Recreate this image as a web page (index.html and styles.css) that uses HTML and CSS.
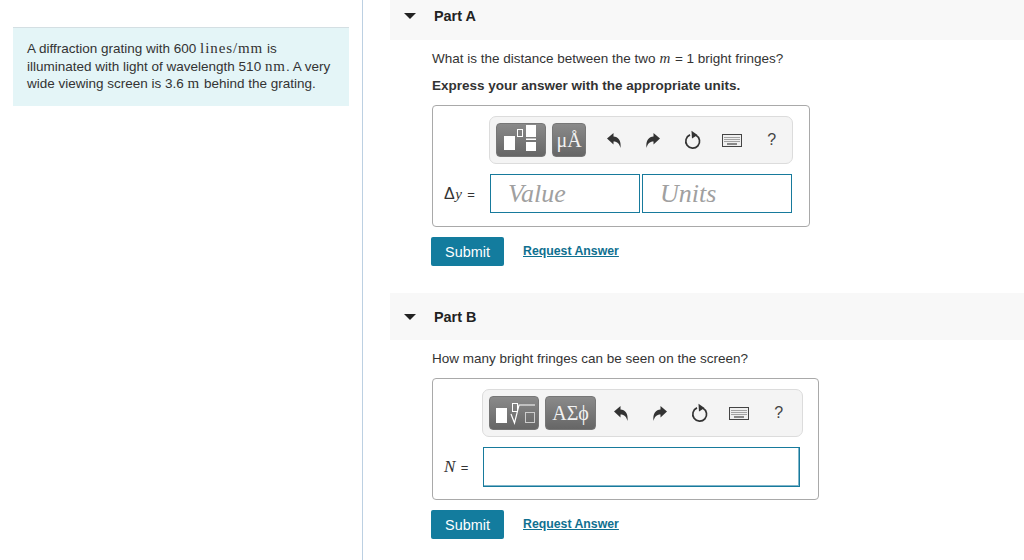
FILE: index.html
```html
<!DOCTYPE html>
<html lang="en">
<head>
<meta charset="utf-8">
<title>Diffraction grating</title>
<link rel="stylesheet" href="styles.css">
</head>
<body>
<div class="page">
  <aside class="left">
    <div class="intro">A diffraction grating with 600 <span class="mr">lines/mm</span> is illuminated with light of wavelength 510 <span class="mr">nm</span>. A very wide viewing screen is 3.6 <span class="mr">m</span> behind the grating.</div>
  </aside>
  <main class="right">
    <section class="part part-a">
      <header class="part-head head-a"><span class="caret"></span><h2>Part A</h2></header>
      <div class="part-body">
        <p class="q q-a">What is the distance between the two <i class="mi">m</i> = 1 bright fringes?</p>
        <p class="instr">Express your answer with the appropriate units.</p>
        <div class="answer answer-a">
          <div class="toolbar tb-a">
            <span class="tbtn tb-wide">
              <svg width="48" height="32" viewBox="1 1 48 32"><rect x="8" y="13" width="11" height="14" fill="#fff"/><rect x="21.5" y="6.5" width="5" height="7" fill="none" stroke="#fff"/><rect x="30" y="2" width="10" height="12" fill="#fff"/><rect x="30" y="15.5" width="10" height="1.5" fill="#fff"/><rect x="30" y="19" width="10" height="9" fill="#fff"/></svg>
            </span>
            <span class="tbtn tb-mu">μÅ</span>
            <div class="tools tools-a">
              <svg class="ic" width="16" height="17" viewBox="0 0 16 17"><use href="#undo"/></svg>
              <svg class="ic" width="16" height="17" viewBox="0 0 16 17"><use href="#redo"/></svg>
              <svg class="ic" width="18" height="20" viewBox="0 0 18 20"><use href="#reset"/></svg>
              <svg class="ic" width="20" height="13" viewBox="0 0 20 13"><use href="#kbd"/></svg>
              <span class="help">?</span>
            </div>
          </div>
          <div class="row row-a">
            <span class="lab lab-a"><span class="delta">Δ</span><i class="mi">y</i> =</span>
            <span class="field f-half">Value</span>
            <span class="field f-half">Units</span>
          </div>
        </div>
        <div class="actions actions-a"><button class="submit">Submit</button><a class="req" href="#">Request Answer</a></div>
      </div>
    </section>
    <section class="part part-b">
      <header class="part-head head-b"><span class="caret"></span><h2>Part B</h2></header>
      <div class="part-body">
        <p class="q q-b">How many bright fringes can be seen on the screen?</p>
        <div class="answer answer-b">
          <div class="toolbar tb-b">
            <span class="tbtn tb-wide">
              <svg width="48" height="32" viewBox="1 1 48 32"><rect x="7" y="12" width="11" height="15" fill="#fff"/><rect x="23.5" y="7.5" width="5" height="8" fill="none" stroke="#fff"/><path d="M22 18l3.5 9 4.5-18h16" fill="none" stroke="#fff" stroke-width="1.2"/><rect x="36.5" y="16.5" width="9" height="10" fill="none" stroke="#ccc"/></svg>
            </span>
            <span class="tbtn tb-greek">ΑΣϕ</span>
            <div class="tools tools-b">
              <svg class="ic" width="16" height="17" viewBox="0 0 16 17"><use href="#undo"/></svg>
              <svg class="ic" width="16" height="17" viewBox="0 0 16 17"><use href="#redo"/></svg>
              <svg class="ic" width="18" height="20" viewBox="0 0 18 20"><use href="#reset"/></svg>
              <svg class="ic" width="20" height="13" viewBox="0 0 20 13"><use href="#kbd"/></svg>
              <span class="help">?</span>
            </div>
          </div>
          <div class="row row-b">
            <span class="lab lab-b"><i class="mi mi-n">N</i> =</span>
            <span class="field f-full"></span>
          </div>
        </div>
        <div class="actions actions-b"><button class="submit">Submit</button><a class="req" href="#">Request Answer</a></div>
      </div>
    </section>
  </main>
</div>
<svg class="defs" width="0" height="0" aria-hidden="true">
  <defs>
    <path id="undo" d="M1 6.5 7.5 1V4.4C12 4.6 15.5 8 14.5 16 13.4 11.8 11.5 9.6 7.5 9.6V12.5Z" fill="#333"/>
    <path id="redo" d="M15 6.5 8.5 1V4.4C4 4.6 .5 8 1.5 16 2.6 11.8 4.5 9.6 8.5 9.6V12.5Z" fill="#333"/>
    <g id="reset"><path d="M12 5.2A6.9 6.9 0 1 1 6 4.9" fill="none" stroke="#333" stroke-width="1.7"/><path d="M7.5 .8 13.5 5 8 8.6Z" fill="#333"/></g>
    <g id="kbd"><rect x="0.5" y="0.5" width="19" height="12" fill="#efefef" stroke="#444"/><path d="M2.5 3.5h15M2.5 5.5h15M2.5 7.5h15" stroke="#555" stroke-dasharray="1 1"/><path d="M5 10h10" stroke="#444" stroke-width="1.2"/></g>
  </defs>
</svg>
</body>
</html>
```
FILE: styles.css
```css
* { box-sizing: border-box; }
html, body { margin: 0; padding: 0; background: #fff; }
body { font-family: "Liberation Sans", Arial, sans-serif; color: #333; overflow: hidden; }
.page { display: grid; grid-template-columns: 363px 1fr; height: 560px; }
.left { border-right: 1px solid #bcd0e2; padding: 27px 13px 0 13px; }
.intro { background: #e4f5f7; border-top: 1px solid #d4dfe3; height: 79px; padding: 12px 14px; font-size: 13.5px; line-height: 17.5px; width: 336px; }
.mr { font-family: "Liberation Serif", serif; font-size: 15px; letter-spacing: .9px; line-height: 0; }
.right { padding-left: 27px; }
.part-head { background: #f8f8f8; display: flex; align-items: center; padding-left: 14px; }
.head-a { height: 40px; padding-bottom: 8px; }
.head-b { height: 47px; }
.caret { width: 0; height: 0; border-left: 6px solid transparent; border-right: 6px solid transparent; border-top: 6px solid #222; }
.part-head h2 { margin: 0 0 0 18px; font-size: 14.4px; font-weight: 700; color: #222; }
.part-b { margin-top: 27px; }
.part-body { padding-left: 42px; }
.q { margin: 0; font-size: 13.5px; line-height: 18px; }
.q-a { padding-top: 10px; }
.q-b { padding-top: 10px; }
.instr { margin: 9px 0 0; font-size: 13.5px; font-weight: 700; line-height: 18px; }
.mi { font-family: "Liberation Serif", serif; font-size: 15px; font-style: italic; letter-spacing: .9px; line-height: 0; }
.mi-n { font-size: 17px; }
.answer { border: 1px solid #a9a9a9; border-radius: 4px; }
.answer-a { width: 378px; height: 122px; margin-top: 10px; padding-top: 10px; }
.answer-b { width: 387px; height: 122px; margin-top: 10px; padding-top: 10px; }
.toolbar { background: #f4f4f4; border: 1px solid #dcdcdc; border-radius: 7px; display: flex; align-items: center; gap: 6px; height: 48px; padding-left: 6px; }
.tb-a { width: 304px; margin-left: 56px; }
.tb-b { width: 321px; margin-left: 49px; }
.tbtn { display: flex; align-items: center; justify-content: center; height: 34px; border-radius: 4px; background: linear-gradient(#8a8a8a, #666); border: 1px solid #777; color: #f2f2f2; font-family: "Liberation Serif", serif; }
.tb-wide { width: 50px; }
.tb-mu { width: 34px; font-size: 20px; }
.tb-greek { width: 51px; font-size: 20px; }
.tools { display: grid; align-items: center; justify-items: center; grid-template-columns: repeat(5, 39.5px); margin-left: 2px; }
.tools-b { margin-left: -1px; }
.ic { display: block; }
.help { font-size: 16px; color: #444; }
.row { display: flex; align-items: center; }
.row-a { margin-top: 10px; gap: 2px; }
.row-b { margin-top: 10px; }
.lab { font-size: 13px; padding-left: 11px; }
.lab-a { width: 55px; word-spacing: 1px; }
.lab-b { width: 50px; word-spacing: 1px; }
.delta { font-size: 16px; letter-spacing: .5px; }
.field { display: block; border: 1px solid #177a9c; background: #fff; font-family: "Liberation Serif", serif; font-style: italic; font-size: 26px; color: #a0a0a0; }
.f-half { width: 150px; height: 39px; padding-left: 17px; line-height: 37px; }
.f-full { width: 317px; height: 40px; box-shadow: inset -1px -1px 0 #7fb5ca; }
.actions { display: flex; align-items: center; margin-left: -1px; }
.actions-a { margin-top: 10px; }
.actions-b { margin-top: 10px; }
.submit { width: 73px; height: 29px; border: 0; border-radius: 2px; background: #137c9e; color: #fff; font: 14.4px "Liberation Sans", Arial, sans-serif; padding: 0; }
.req { margin-left: 19px; color: #0f7090; font-size: 12.3px; font-weight: 700; margin-top: -1px; }
.defs { position: absolute; }
```
